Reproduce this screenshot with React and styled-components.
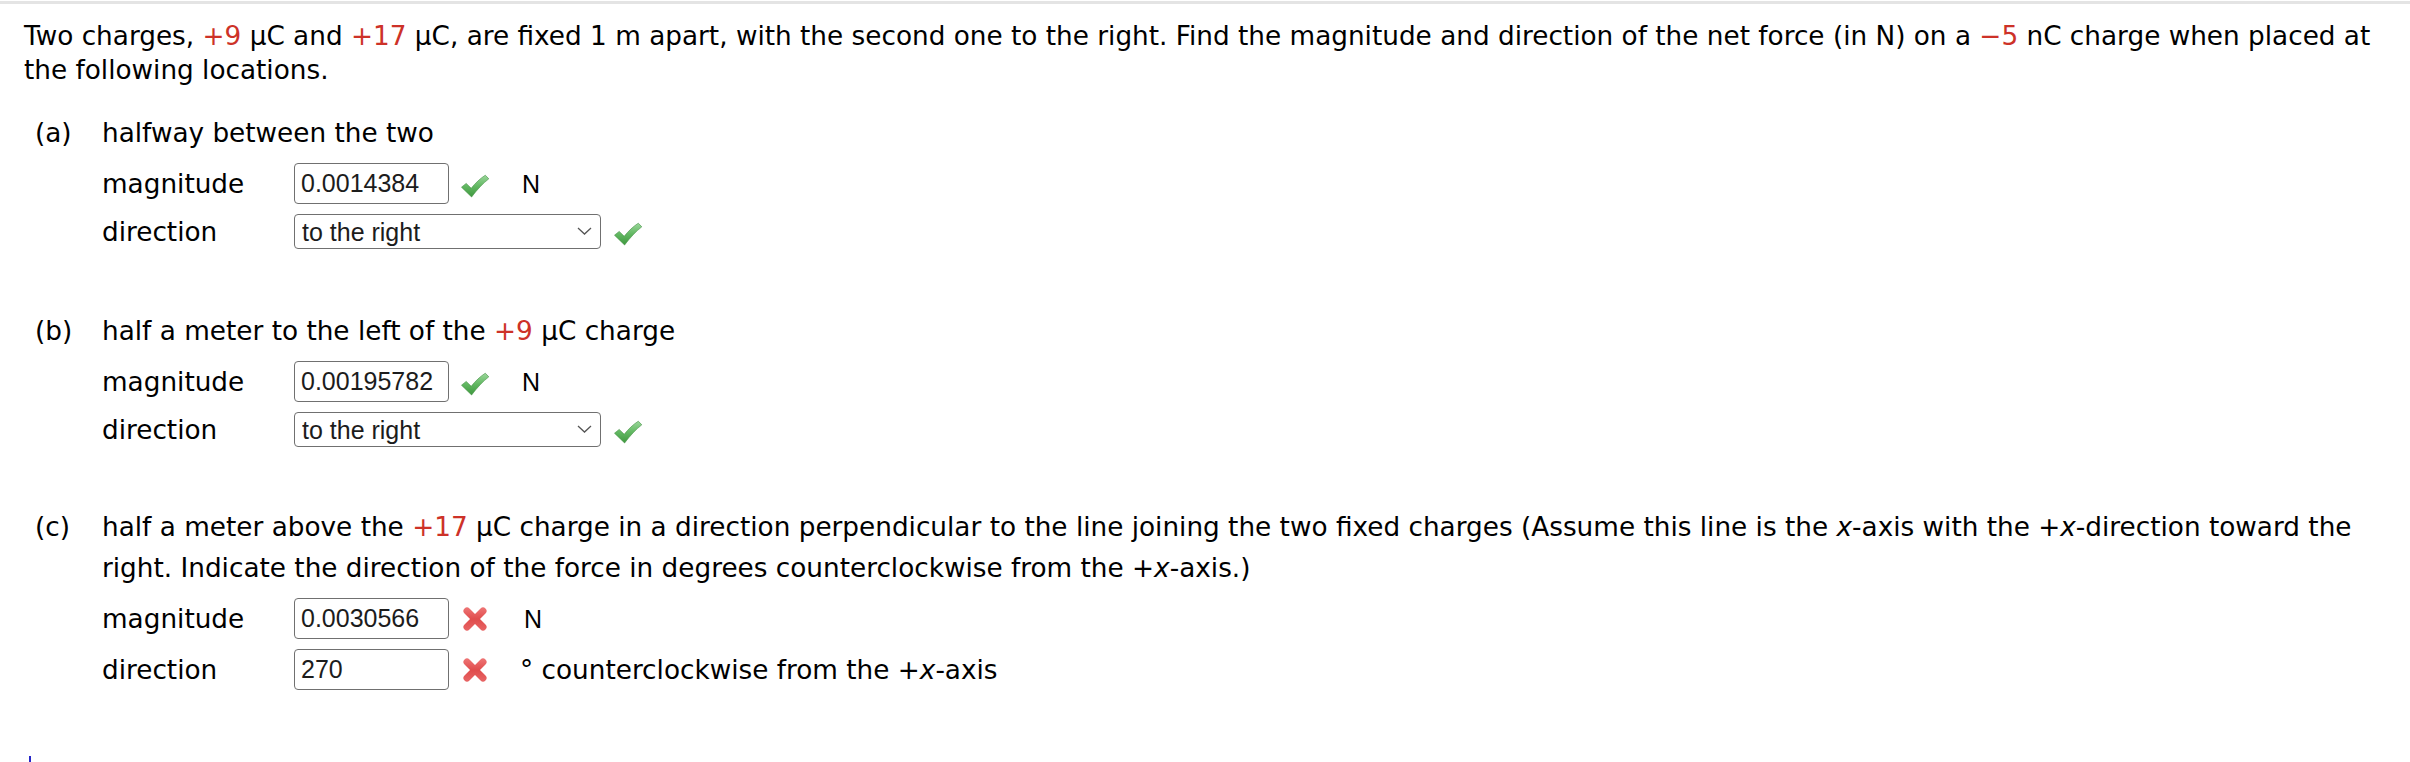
import React from "react";
import styled, { createGlobalStyle } from "styled-components";

const Global = createGlobalStyle`
  html, body { margin: 0; padding: 0; background: #fff; }
  body { font-family: Verdana, "DejaVu Sans", sans-serif; }
`;

const Page = styled.div`
  margin-top: 1px;
  border-top: 3px solid #e4e4e4;
  padding: 15px 20px 0 24px;
  font-family: Verdana, "DejaVu Sans", sans-serif;
  font-size: 26.3px;
  line-height: 34px;
  color: #000;
`;

const Intro = styled.p`
  margin: 0;
`;

const Red = styled.span`
  color: #cd3228;
`;

const Var = styled.i`
  font-style: italic;
`;

const Part = styled.section`
  display: grid;
  grid-template-columns: 67px 1fr;
  padding-left: 11px;
  margin-top: ${(p) => p.$gap}px;
`;

const PartLetter = styled.span`
  line-height: ${(p) => p.$lh || 34}px;
`;

const PartBody = styled.div`
  display: flex;
  flex-direction: column;
`;

const PartTitle = styled.div`
  line-height: ${(p) => p.$lh || 34}px;
  margin-bottom: ${(p) => (p.$after === undefined ? 3 : p.$after)}px;
`;

const Row = styled.div`
  display: flex;
  align-items: center;
  margin-top: 10px;
`;

const Label = styled.span`
  flex: none;
  width: 192px;
`;

const TextBox = styled.input`
  box-sizing: border-box;
  width: 155px;
  height: 41px;
  margin: 0;
  padding: 0 6px;
  border: 1.5px solid #707070;
  border-radius: 4px;
  background: #fff;
  color: #1c1c1c;
  font-family: Arial, "Liberation Sans", sans-serif;
  font-size: 25px;
  outline: none;
`;

const SelectWrap = styled.div`
  position: relative;
  flex: none;
  width: 307px;
  height: 35px;
`;

const Select = styled.select`
  appearance: none;
  -webkit-appearance: none;
  box-sizing: border-box;
  width: 100%;
  height: 100%;
  margin: 0;
  padding: 0 30px 0 7px;
  border: 1.5px solid #707070;
  border-radius: 4px;
  background: #fff;
  color: #1c1c1c;
  font-family: Arial, "Liberation Sans", sans-serif;
  font-size: 25px;
  outline: none;
`;

const Chevron = styled.svg`
  position: absolute;
  right: 9px;
  top: 13px;
  pointer-events: none;
`;

const Mark = styled.span`
  flex: none;
  display: flex;
  align-items: center;
  justify-content: center;
  width: 30px;
  margin-left: ${(p) => p.$gap || 11}px;
  padding-top: ${(p) => p.$drop || 0}px;
`;

const Unit = styled.span`
  margin-left: ${(p) => p.$gap || 30}px;
  font-family: ${(p) =>
    p.$arial ? 'Arial, "Liberation Sans", sans-serif' : 'Verdana, "DejaVu Sans", sans-serif'};
  font-size: ${(p) => (p.$arial ? 25 : 26.3)}px;
`;

const Footer = styled.div`
  margin-top: 66px;
  padding-left: 5px;
  height: 8px;
  overflow: hidden;
`;

const Caret = styled.span`
  display: block;
  width: 2px;
  height: 8px;
  background: #2727c8;
`;

let uid = 0;
function Check() {
  const id = React.useMemo(() => `cg${uid++}`, []);
  return (
    <svg width="30" height="24" viewBox="0 0 30 24" aria-hidden="true">
      <defs>
        <linearGradient id={id} x1="0" y1="0" x2="0" y2="1">
          <stop offset="0" stopColor="#9bd79b" />
          <stop offset="0.5" stopColor="#62b862" />
          <stop offset="1" stopColor="#3e983e" />
        </linearGradient>
      </defs>
      <path
        d="M1.5 13.2 L6.2 9.4 L11.2 14.3 C15.5 9 20 4.6 25.3 1.2 L28.8 4.8 C22.6 9.6 17 15.8 11.6 23 Z"
        fill={`url(#${id})`}
        stroke="#3f8f3f"
        strokeWidth="0.6"
        strokeLinejoin="round"
      />
    </svg>
  );
}

function Cross() {
  const id = React.useMemo(() => `xg${uid++}`, []);
  return (
    <svg width="26" height="26" viewBox="0 0 26 26" aria-hidden="true">
      <defs>
        <linearGradient id={id} x1="0" y1="0" x2="0" y2="26" gradientUnits="userSpaceOnUse">
          <stop offset="0" stopColor="#f07a7a" />
          <stop offset="0.5" stopColor="#e04c4c" />
          <stop offset="1" stopColor="#e86868" />
        </linearGradient>
      </defs>
      <g stroke={`url(#${id})`} strokeWidth="7" strokeLinecap="round">
        <line x1="5" y1="5" x2="21" y2="21" />
        <line x1="21" y1="5" x2="5" y2="21" />
      </g>
    </svg>
  );
}

function Dropdown({ value }) {
  return (
    <SelectWrap>
      <Select defaultValue={value}>
        <option value="">---Select---</option>
        <option value="to the left">to the left</option>
        <option value="to the right">to the right</option>
        <option value="zero">the force is zero</option>
      </Select>
      <Chevron width="15" height="8" viewBox="0 0 15 8">
        <path d="M1 1 L7.5 7 L14 1" fill="none" stroke="#555" strokeWidth="1.3" />
      </Chevron>
    </SelectWrap>
  );
}

function NumberRow({ label, value, ok, unit, unitArial, unitGap }) {
  return (
    <Row>
      <Label>{label}</Label>
      <TextBox defaultValue={value} />
      <Mark $drop={ok ? 4 : 0}>{ok ? <Check /> : <Cross />}</Mark>
      <Unit $arial={unitArial} $gap={unitGap}>
        {unit}
      </Unit>
    </Row>
  );
}

function SelectRow({ label, value }) {
  return (
    <Row>
      <Label>{label}</Label>
      <Dropdown value={value} />
      <Mark $drop={4} $gap={12}>
        <Check />
      </Mark>
    </Row>
  );
}

export default function App() {
  return (
    <>
      <Global />
      <Page>
        <Intro>
          Two charges, <Red>+9</Red> µC and <Red>+17</Red> µC, are fixed 1 m apart, with the
          second one to the right. Find the magnitude and direction of the net force (in N) on a{" "}
          <Red>−5</Red> nC charge when placed at the following locations.
        </Intro>

        <Part $gap={29}>
          <PartLetter>(a)</PartLetter>
          <PartBody>
            <PartTitle>halfway between the two</PartTitle>
            <NumberRow label="magnitude" value="0.0014384" ok unit="N" unitArial unitGap={32} />
            <SelectRow label="direction" value="to the right" />
          </PartBody>
        </Part>

        <Part $gap={65}>
          <PartLetter>(b)</PartLetter>
          <PartBody>
            <PartTitle>
              half a meter to the left of the <Red>+9</Red> µC charge
            </PartTitle>
            <NumberRow label="magnitude" value="0.00195782" ok unit="N" unitArial unitGap={32} />
            <SelectRow label="direction" value="to the right" />
          </PartBody>
        </Part>

        <Part $gap={60}>
          <PartLetter $lh={41}>(c)</PartLetter>
          <PartBody>
            <PartTitle $lh={41} $after={-1}>
              half a meter above the <Red>+17</Red> µC charge in a direction perpendicular to the
              line joining the two fixed charges (Assume this line is the <Var>x</Var>-axis with the
              +<Var>x</Var>-direction toward the right. Indicate the direction of the force in
              degrees counterclockwise from the +<Var>x</Var>-axis.)
            </PartTitle>
            <NumberRow label="magnitude" value="0.0030566" unit="N" unitArial unitGap={34} />
            <NumberRow
              label="direction"
              value="270"
              unit={
                <>
                  ° counterclockwise from the +<Var>x</Var>-axis
                </>
              }
              unitGap={30}
            />
          </PartBody>
        </Part>

        <Footer>
          <Caret />
        </Footer>
      </Page>
    </>
  );
}
